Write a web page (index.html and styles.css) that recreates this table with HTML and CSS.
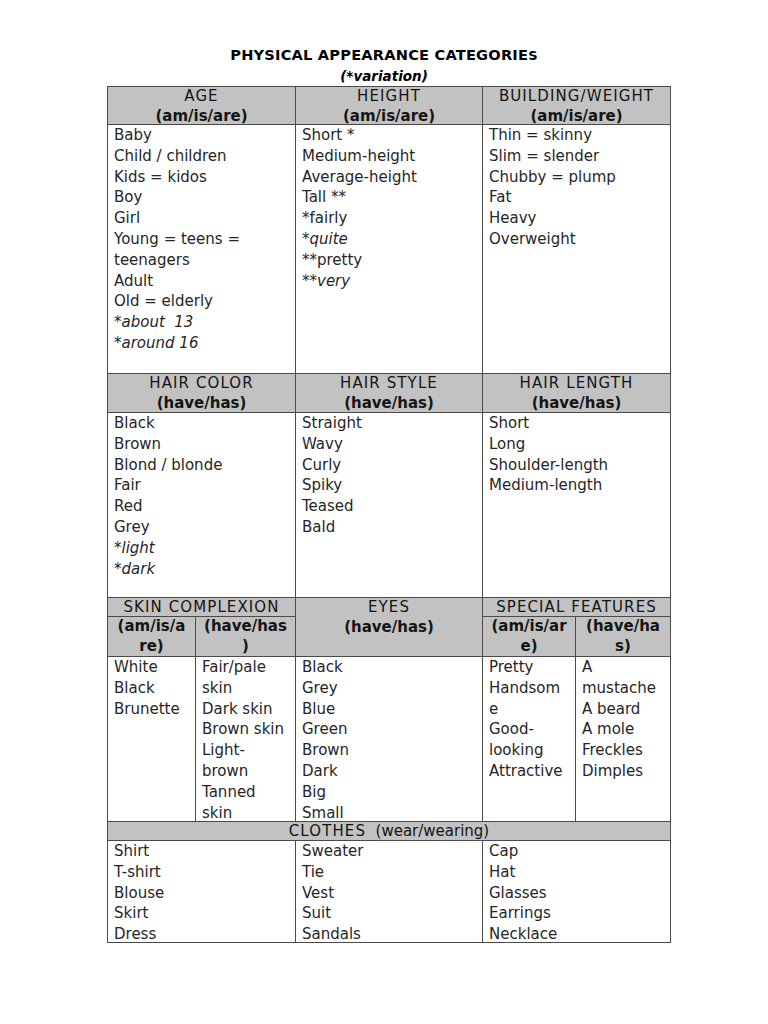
FILE: index.html
```html
<!DOCTYPE html>
<html>
<head>
<meta charset="utf-8">
<link rel="stylesheet" href="styles.css">
</head>
<body>
<div class="page">
  <h1 class="title">PHYSICAL APPEARANCE CATEGORIE<span class="small-s">S</span></h1>
  <div class="subtitle">(*variation)</div>
  <div class="sheet">
    <div class="hd span2"><div class="cap">AGE</div><div class="verb">(am/is/are)</div></div>
    <div class="hd"><div class="cap">HEIGHT</div><div class="verb">(am/is/are)</div></div>
    <div class="hd span2"><div class="cap">BUILDING/WEIGHT</div><div class="verb">(am/is/are)</div></div>

    <div class="bd span2">
      <div>Baby</div><div>Child / children</div><div>Kids = kidos</div><div>Boy</div><div>Girl</div>
      <div>Young = teens =</div><div>teenagers</div><div>Adult</div><div>Old = elderly</div>
      <div class="it">*about&nbsp; 13</div><div class="it">*around 16</div>
    </div>
    <div class="bd">
      <div>Short *</div><div>Medium-height</div><div>Average-height</div><div>Tall **</div>
      <div>*fairly</div><div>*<i>quite</i></div><div>**pretty</div><div>**<i>very</i></div>
    </div>
    <div class="bd span2">
      <div>Thin = skinny</div><div>Slim = slender</div><div>Chubby = plump</div><div>Fat</div>
      <div>Heavy</div><div>Overweight</div>
    </div>

    <div class="hd span2"><div class="cap">HAIR COLOR</div><div class="verb">(have/has)</div></div>
    <div class="hd"><div class="cap">HAIR STYLE</div><div class="verb">(have/has)</div></div>
    <div class="hd span2"><div class="cap">HAIR LENGTH</div><div class="verb">(have/has)</div></div>

    <div class="bd span2">
      <div>Black</div><div>Brown</div><div>Blond / blonde</div><div>Fair</div><div>Red</div>
      <div>Grey</div><div>*<i>light</i></div><div>*<i>dark</i></div>
    </div>
    <div class="bd">
      <div>Straight</div><div>Wavy</div><div>Curly</div><div>Spiky</div><div>Teased</div><div>Bald</div>
    </div>
    <div class="bd span2">
      <div>Short</div><div>Long</div><div>Shoulder-length</div><div>Medium-length</div>
    </div>

    <div class="hd span2 one cap">SKIN COMPLEXION</div>
    <div class="hd eyes"><div class="cap">EYES</div><div class="verb">(have/has)</div></div>
    <div class="hd span2 one cap">SPECIAL FEATURES</div>

    <div class="hd sub verb"><div>(am/is/a</div><div>re)</div></div>
    <div class="hd sub verb"><div>(have/has</div><div>)</div></div>
    <div class="hd sub verb"><div>(am/is/ar</div><div>e)</div></div>
    <div class="hd sub verb"><div>(have/ha</div><div>s)</div></div>

    <div class="bd">
      <div>White</div><div>Black</div><div>Brunette</div>
    </div>
    <div class="bd">
      <div>Fair/pale</div><div>skin</div><div>Dark skin</div><div>Brown skin</div><div>Light-</div>
      <div>brown</div><div>Tanned</div><div>skin</div>
    </div>
    <div class="bd">
      <div>Black</div><div>Grey</div><div>Blue</div><div>Green</div><div>Brown</div>
      <div>Dark</div><div>Big</div><div>Small</div>
    </div>
    <div class="bd">
      <div>Pretty</div><div>Handsom</div><div>e</div><div>Good-</div><div>looking</div><div>Attractive</div>
    </div>
    <div class="bd">
      <div>A</div><div>mustache</div><div>A beard</div><div>A mole</div><div>Freckles</div><div>Dimples</div>
    </div>

    <div class="hd span5 one"><span class="cap">CLOTHES</span>&nbsp; (wear/wearing)</div>

    <div class="bd span2">
      <div>Shirt</div><div>T-shirt</div><div>Blouse</div><div>Skirt</div><div>Dress</div>
    </div>
    <div class="bd">
      <div>Sweater</div><div>Tie</div><div>Vest</div><div>Suit</div><div>Sandals</div>
    </div>
    <div class="bd span2">
      <div>Cap</div><div>Hat</div><div>Glasses</div><div>Earrings</div><div>Necklace</div>
    </div>
  </div>
</div>
</body>
</html>
```

FILE: styles.css
```css
html, body {
  margin: 0;
  padding: 0;
  background: #ffffff;
}

.page {
  width: 768px;
  padding-top: 45px;
  font-family: "DejaVu Sans", "Liberation Sans", sans-serif;
  color: #1e1e1e;
}

.title {
  margin: 0;
  text-align: center;
  font-size: 14.6px;
  font-weight: 900;
  line-height: 20px;
  color: #000;
  letter-spacing: 0.2px;
}

.small-s {
  font-size: 13px;
  font-weight: 700;
}

.subtitle {
  text-align: center;
  font-size: 13.5px;
  font-weight: 700;
  font-style: italic;
  line-height: 20px;
  color: #000;
}

.sheet {
  margin-left: 107px;
  width: 564px;
  box-sizing: border-box;
  border: 1px solid #4a4a4a;
  background: #4a4a4a;
  display: grid;
  grid-template-columns: 87px 99px 186px 92px 94px;
  grid-template-rows: 37px 248px 38px 184px 18px 39px 164px 18px 101px;
  gap: 1px;
  font-size: 15px;
}

.hd {
  background: #c2c2c2;
  text-align: center;
  line-height: 19.5px;
  color: #141414;
}

.hd.one {
  line-height: 18px;
}

.cap {
  letter-spacing: 1.1px;
}

.verb {
  font-weight: 700;
}

.eyes {
  grid-row: span 2;
}

.bd {
  background: #ffffff;
  padding-left: 6px;
  line-height: 20.8px;
  color: #262626;
  white-space: nowrap;
}

.span2 {
  grid-column: span 2;
}

.span5 {
  grid-column: span 5;
}

.it, .bd i {
  font-style: italic;
}
```
